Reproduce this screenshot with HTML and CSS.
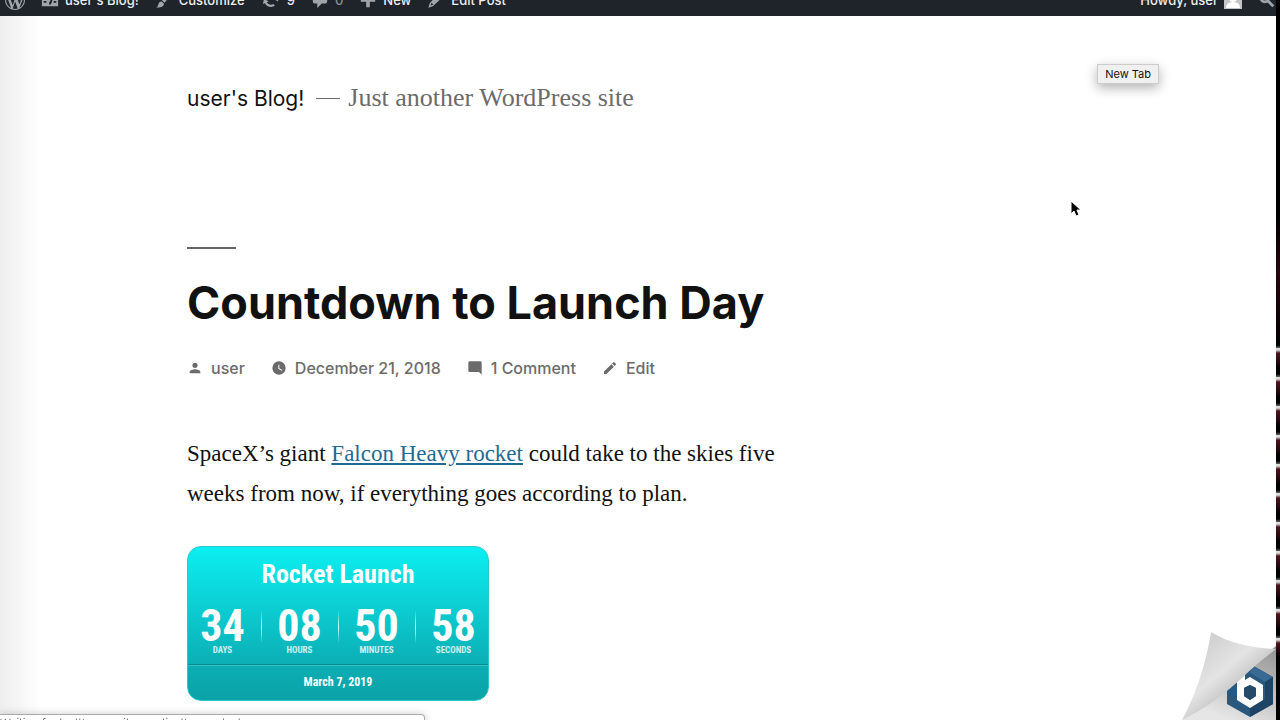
FILE: index.html
```
<!DOCTYPE html>
<html lang="en">
<head>
    <meta charset="UTF-8">
    <meta name="viewport" content="width=device-width, initial-scale=1.0">
    <title>Countdown to Launch Day - user's Blog!</title>
    <link rel="stylesheet" href="styles.css">
</head>
<body>
    <div class="desktop-edge"></div>
    <div class="page">
        <nav class="admin-bar">
            <a href="#" aria-label="About WordPress">
                <svg width="20" height="20" viewBox="0 0 20 20"><path fill="currentColor" d="M20 10c0-5.51-4.49-10-10-10C4.48 0 0 4.490 0 10c0 5.520 4.480 10 10 10 5.510 0 10-4.480 10-10zM7.780 15.370L4.370 6.220c.55-.02 1.170-.08 1.170-.08.5-.06.44-1.130-.06-1.110 0 0-1.450.11-2.370.11-.18 0-.37 0-.58-.01C4.120 2.690 6.870 1.110 10 1.110c2.330 0 4.450.87 6.050 2.340-.68-.11-1.650.39-1.650 1.580 0 .74.45 1.360.9 2.100.35.61.55 1.360.55 2.460 0 1.490-1.400 5-1.400 5l-3.030-8.370c.54-.02.82-.17.82-.17.5-.05.44-1.250-.06-1.220 0 0-1.440.12-2.380.12-.87 0-2.330-.12-2.330-.12-.5-.03-.56 1.200-.06 1.220l.92.08 1.260 3.410zM17.410 10c.24-.64.74-1.870.43-4.250.7 1.290 1.050 2.710 1.050 4.250 0 3.290-1.730 6.240-4.400 7.780.97-2.590 1.940-5.200 2.920-7.780zM6.100 18.090C3.120 16.650 1.110 13.530 1.110 10c0-1.300.23-2.480.72-3.590C3.250 10.300 4.670 14.200 6.100 18.090zm4.030-6.630l2.580 6.980c-.86.29-1.760.45-2.710.45-.79 0-1.570-.11-2.290-.33.81-2.380 1.620-4.740 2.420-7.100z"/></svg>
            </a>
            <a href="#">
                <svg width="18" height="18" viewBox="0 0 20 20"><path fill="currentColor" fill-rule="evenodd" d="M10 2a9 9 0 0 1 9 9v6H1v-6a9 9 0 0 1 9-9zM3 11v2h3v-2zm11 0v2h3v-2zM9 4v3h2V4zm4 2-4 7v2h2l3-8z"/></svg>
                <span>user's Blog!</span>
            </a>
            <a href="#">
                <svg width="18" height="18" viewBox="0 0 20 20"><path fill="currentColor" d="M18.300 3.300 10.700 13 7.800 10.600 16.200 1.700c1.400-1.200 3.200.3 2.100 1.600zM10 14c-.3 4-4 4.600-9 4.300 2.100-.8 2.300-2 2.700-3.700.6-2.300 2.100-3.200 3.500-3z"/></svg>
                <span>Customize</span>
            </a>
            <a href="#">
                <svg width="20" height="20" viewBox="0 0 20 20"><path fill="currentColor" d="M10.200 3.300c2.600 0 4.900 1.500 6 3.700l1.800-.9-1 5.400-4.700-2.800 1.900-.8a4.600 4.600 0 0 0-6.600-1.600L6 4.600a7 7 0 0 1 4.200-1.300zM3 8.700l4.700 2.800-1.900.8a4.600 4.600 0 0 0 6.600 1.700l1.600 1.600A7 7 0 0 1 3.800 13.200l-1.900.9z"/></svg>
                <span>9</span>
            </a>
            <a href="#">
                <svg width="18" height="18" viewBox="0 0 20 20"><path fill="currentColor" d="M5 2h10a3 3 0 0 1 3 3v6a3 3 0 0 1-3 3h-3l-5 5v-5H5a3 3 0 0 1-3-3V5a3 3 0 0 1 3-3z"/></svg>
                <span class="muted">0</span>
            </a>
            <a href="#">
                <svg width="18" height="18" viewBox="0 0 20 20"><path fill="currentColor" d="M8 2h4v6h6v4h-6v6H8v-6H2V8h6z"/></svg>
                <span>New</span>
            </a>
            <a href="#">
                <svg width="18" height="18" viewBox="0 0 20 20"><path fill="currentColor" d="M13.500 2.500l4 4-2 2-4-4zM10.500 5.500l4 4-8 7.500-5 1.500L3 13.500zM5 13l-1 3 3-1z"/></svg>
                <span>Edit Post</span>
            </a>
            <a href="#" class="account">
                <span>Howdy, user</span>
                <svg class="avatar" width="18" height="18" viewBox="0 0 18 18"><rect width="18" height="18" fill="#c3c4c7"/><circle cx="9" cy="7" r="4" fill="#fff"/><path fill="#fff" d="M2 17c0-4 3-6 7-6s7 2 7 6z"/></svg>
            </a>
            <a href="#" aria-label="Search">
                <svg width="18" height="18" viewBox="0 0 20 20"><path fill="none" stroke="currentColor" stroke-width="3" d="M11 11l6 6M12 7.500a4.500 4.500 0 1 1-9 0 4.500 4.500 0 0 1 9 0z"/></svg>
            </a>
        </nav>

        <header class="site-header">
            <a href="#" class="site-title">user's Blog!</a>
            <span class="dash"></span>
            <span class="tagline">Just another WordPress site</span>
        </header>

        <article class="post">
            <h1>Countdown to Launch Day</h1>
            <div class="post-meta">
                <a href="#">
                    <svg width="16" height="16" viewBox="0 0 24 24"><path fill="currentColor" d="M12 12c2.210 0 4-1.790 4-4s-1.790-4-4-4-4 1.790-4 4 1.790 4 4 4zm0 2c-2.670 0-8 1.340-8 4v2h16v-2c0-2.660-5.330-4-8-4z"/></svg>
                    <span>user</span>
                </a>
                <a href="#">
                    <svg width="16" height="16" viewBox="0 0 24 24"><path fill="currentColor" d="M12 2a10 10 0 1 0 0 20 10 10 0 0 0 0-20zm4.200 14.200L11 13V7h1.500v5.200l4.500 2.700z"/></svg>
                    <span>December 21, 2018</span>
                </a>
                <a href="#">
                    <svg width="16" height="16" viewBox="0 0 24 24"><path fill="currentColor" d="M22 4a2 2 0 0 0-2-2H4a2 2 0 0 0-2 2v12a2 2 0 0 0 2 2h14l4 4z"/></svg>
                    <span>1 Comment</span>
                </a>
                <a href="#">
                    <svg width="16" height="16" viewBox="0 0 24 24"><path fill="currentColor" d="M3 17.250V21h3.750L17.810 9.940l-3.750-3.750zM20.710 7.040a1 1 0 0 0 0-1.410l-2.340-2.340a1 1 0 0 0-1.410 0l-1.830 1.830 3.750 3.750z"/></svg>
                    <span>Edit</span>
                </a>
            </div>
            <p>SpaceX’s giant <a href="#">Falcon Heavy rocket</a> could take to the skies five weeks from now, if everything goes according to plan.</p>

            <div class="countdown">
                <h2>Rocket Launch</h2>
                <div class="units">
                    <div class="unit"><strong>34</strong><small>DAYS</small></div>
                    <div class="unit"><strong>08</strong><small>HOURS</small></div>
                    <div class="unit"><strong>50</strong><small>MINUTES</small></div>
                    <div class="unit"><strong>58</strong><small>SECONDS</small></div>
                </div>
                <div class="date">March 7, 2019</div>
            </div>
        </article>
    </div>

    <!-- Things that float over the page -->
    <div class="tooltip">New Tab</div>
    <svg class="cursor" width="14" height="20" viewBox="0 0 14 20"><path fill="#000" stroke="#fff" d="M2 1v13l3-3 2 5 3-1-2-5h4z"/></svg>
    <div class="status">Waiting for testthemesuite.creativethemes.test...</div>
    <svg class="page-curl" width="96" height="90" viewBox="0 0 96 90">
        <defs>
            <linearGradient id="fold" x1="0.200" y1="0.200" x2="0.650" y2="0.700">
                <stop offset="0" stop-color="#d2d2d2"/>
                <stop offset="0.500" stop-color="#e4e4e4"/>
                <stop offset="1" stop-color="#bcbcbc"/>
            </linearGradient>
            <linearGradient id="under" x1="1" y1="0" x2="0.500" y2="1">
                <stop offset="0" stop-color="#929292"/>
                <stop offset="1" stop-color="#e6e6e6"/>
            </linearGradient>
        </defs>
        <path fill="url(#under)" d="M96 16 2 90h94z"/>
        <path fill="#29587f" d="M70 34 93 47v27L70 87 47 74V47z"/>
        <path fill="#386a93" d="M70 34 93 47l-8 5-15-9z"/>
        <path fill="#1d4365" d="M93 47v27l-23 13v-9l15-9V52z"/>
        <path fill="#fff" fill-rule="evenodd" d="M57 42l8-5v13l5-3 13 8v15l-13 8-13-8zM70 55l-6 3v8l6 4 6-4v-8z"/>
        <path fill="#264a69" d="M70 55l6 3v8l-6 4-6-4v-8z"/>
        <path fill="url(#fold)" d="M31 2c18 11 40 16 65 17-10 8-22 17-34 29C42 66 26 78 2 90 16 64 26 34 31 2z"/>
    </svg>
</body>
</html>
```
FILE: styles.css
```
:root {
    --text: #111;
    --muted: #6b6b6b;
    --link: #1f6b96;
    --bar: #1f242a;
    --sans: Inter, "Liberation Sans", Arial, sans-serif;
    --serif: "Liberation Serif", "Times New Roman", serif;
    --narrow: "Liberation Sans Narrow", "Roboto Condensed", Roboto, sans-serif;
}

* {
    box-sizing: border-box;
}

body {
    display: flex;
    flex-direction: row-reverse;
    min-height: 100vh;
    margin: 0;
    overflow: hidden;
    color: var(--text);
    font-family: var(--sans);
}

a {
    color: inherit;
    text-decoration: none;
}

.desktop-edge {
    width: 4px;
    background: linear-gradient(#000 0 30%, #26070d 38%, #000 48%, transparent 48% 90%, #000 92%),
        repeating-linear-gradient(#ddd 0 2px, #4a131a 5px, #250a10 14px, #000 20px 26px, #666 29px);
}

.page {
    flex: 1;
    background: linear-gradient(90deg, #eee, #fff 40px);
}

/* Scrolled half out of view */
.admin-bar {
    display: flex;
    align-items: center;
    gap: 16px;
    height: 32px;
    margin-top: -16px;
    padding: 0 0 0 5px;
    overflow: hidden;
    background: var(--bar);
    color: #eee;
    font-size: 13px;
    font-weight: 500;
    line-height: 20px;
}

.admin-bar a {
    display: flex;
    flex-shrink: 0;
    align-items: center;
    gap: 6px;
}

.admin-bar svg {
    color: #a0a5aa;
}

.admin-bar .muted {
    color: #8a8f94;
}

.admin-bar .account {
    margin-left: auto;
}

.site-header {
    display: flex;
    align-items: center;
    height: 36px;
    margin: 64px 0 0 187px;
}

.site-title {
    font-size: 21px;
}

.dash {
    width: 24px;
    height: 1px;
    margin: 0 8px 0 12px;
    background: var(--muted);
}

.tagline {
    color: var(--muted);
    font-family: var(--serif);
    font-size: 26px;
}

.post {
    max-width: 800px;
    margin: 131px 0 0 187px;
}

.post::before {
    content: "";
    display: block;
    width: 49px;
    height: 2px;
    background: #666;
}

.post h1 {
    margin: 26px 0 0;
    font-size: 45px;
    font-weight: 700;
    line-height: 56px;
}

.post-meta {
    display: flex;
    gap: 26px;
    margin-top: 25px;
    color: var(--muted);
    font-size: 16px;
    font-weight: 500;
    line-height: 24px;
}

.post-meta a {
    display: flex;
    align-items: center;
    gap: 8px;
}

.post p {
    max-width: 600px;
    margin: 54px 0 0;
    font-family: var(--serif);
    font-size: 23px;
    line-height: 40px;
}

.post p a {
    color: var(--link);
    text-decoration: underline;
}

.countdown {
    width: 302px;
    margin-top: 32px;
    overflow: hidden;
    border: 1px solid #2bc9cc;
    border-radius: 14px;
    background: linear-gradient(#0ceff2, #0bb0b6 75%, #0aa2a7);
    color: #fff;
    font-family: var(--narrow);
    text-align: center;
}

.countdown h2 {
    margin: 11px 0 0;
    font-size: 26px;
    line-height: 32px;
}

.units {
    display: grid;
    grid-template-columns: repeat(4, 1fr);
    margin: 16px -4px 10px;
}

.unit {
    position: relative;
}

.unit + .unit::before {
    content: "";
    position: absolute;
    top: 4px;
    left: 0;
    width: 1px;
    height: 34px;
    background: linear-gradient(transparent, #d5ffff, transparent);
}

.unit strong {
    display: block;
    font-size: 44px;
    line-height: 40px;
}

.unit small {
    display: block;
    font-size: 9px;
    font-weight: 700;
    line-height: 8px;
    opacity: 0.8;
}

.date {
    border-top: 1px solid #098b92;
    box-shadow: inset 0 1px #35c2c6;
    font-size: 12px;
    font-weight: 700;
    line-height: 35px;
}

.tooltip {
    position: absolute;
    top: 64px;
    right: 121px;
    padding: 0 7px;
    border: 1px solid #ccc;
    background: #f0f0f0;
    box-shadow: 0 4px 12px rgba(0,0,0,0.3);
    font-size: 11px;
    line-height: 18px;
}

.cursor {
    position: absolute;
    top: 200px;
    right: 197px;
}

.status {
    position: fixed;
    bottom: -14px;
    left: 0;
    width: 425px;
    height: 20px;
    border: 1px solid #aaa;
    border-left: 0;
    border-radius: 0 4px 0 0;
    background: #fff;
    box-shadow: 0 0 8px rgba(0,0,0,0.2);
    color: #777;
    font-size: 11px;
    line-height: 16px;
}

.page-curl {
    position: fixed;
    right: 4px;
    bottom: 0;
}
```
